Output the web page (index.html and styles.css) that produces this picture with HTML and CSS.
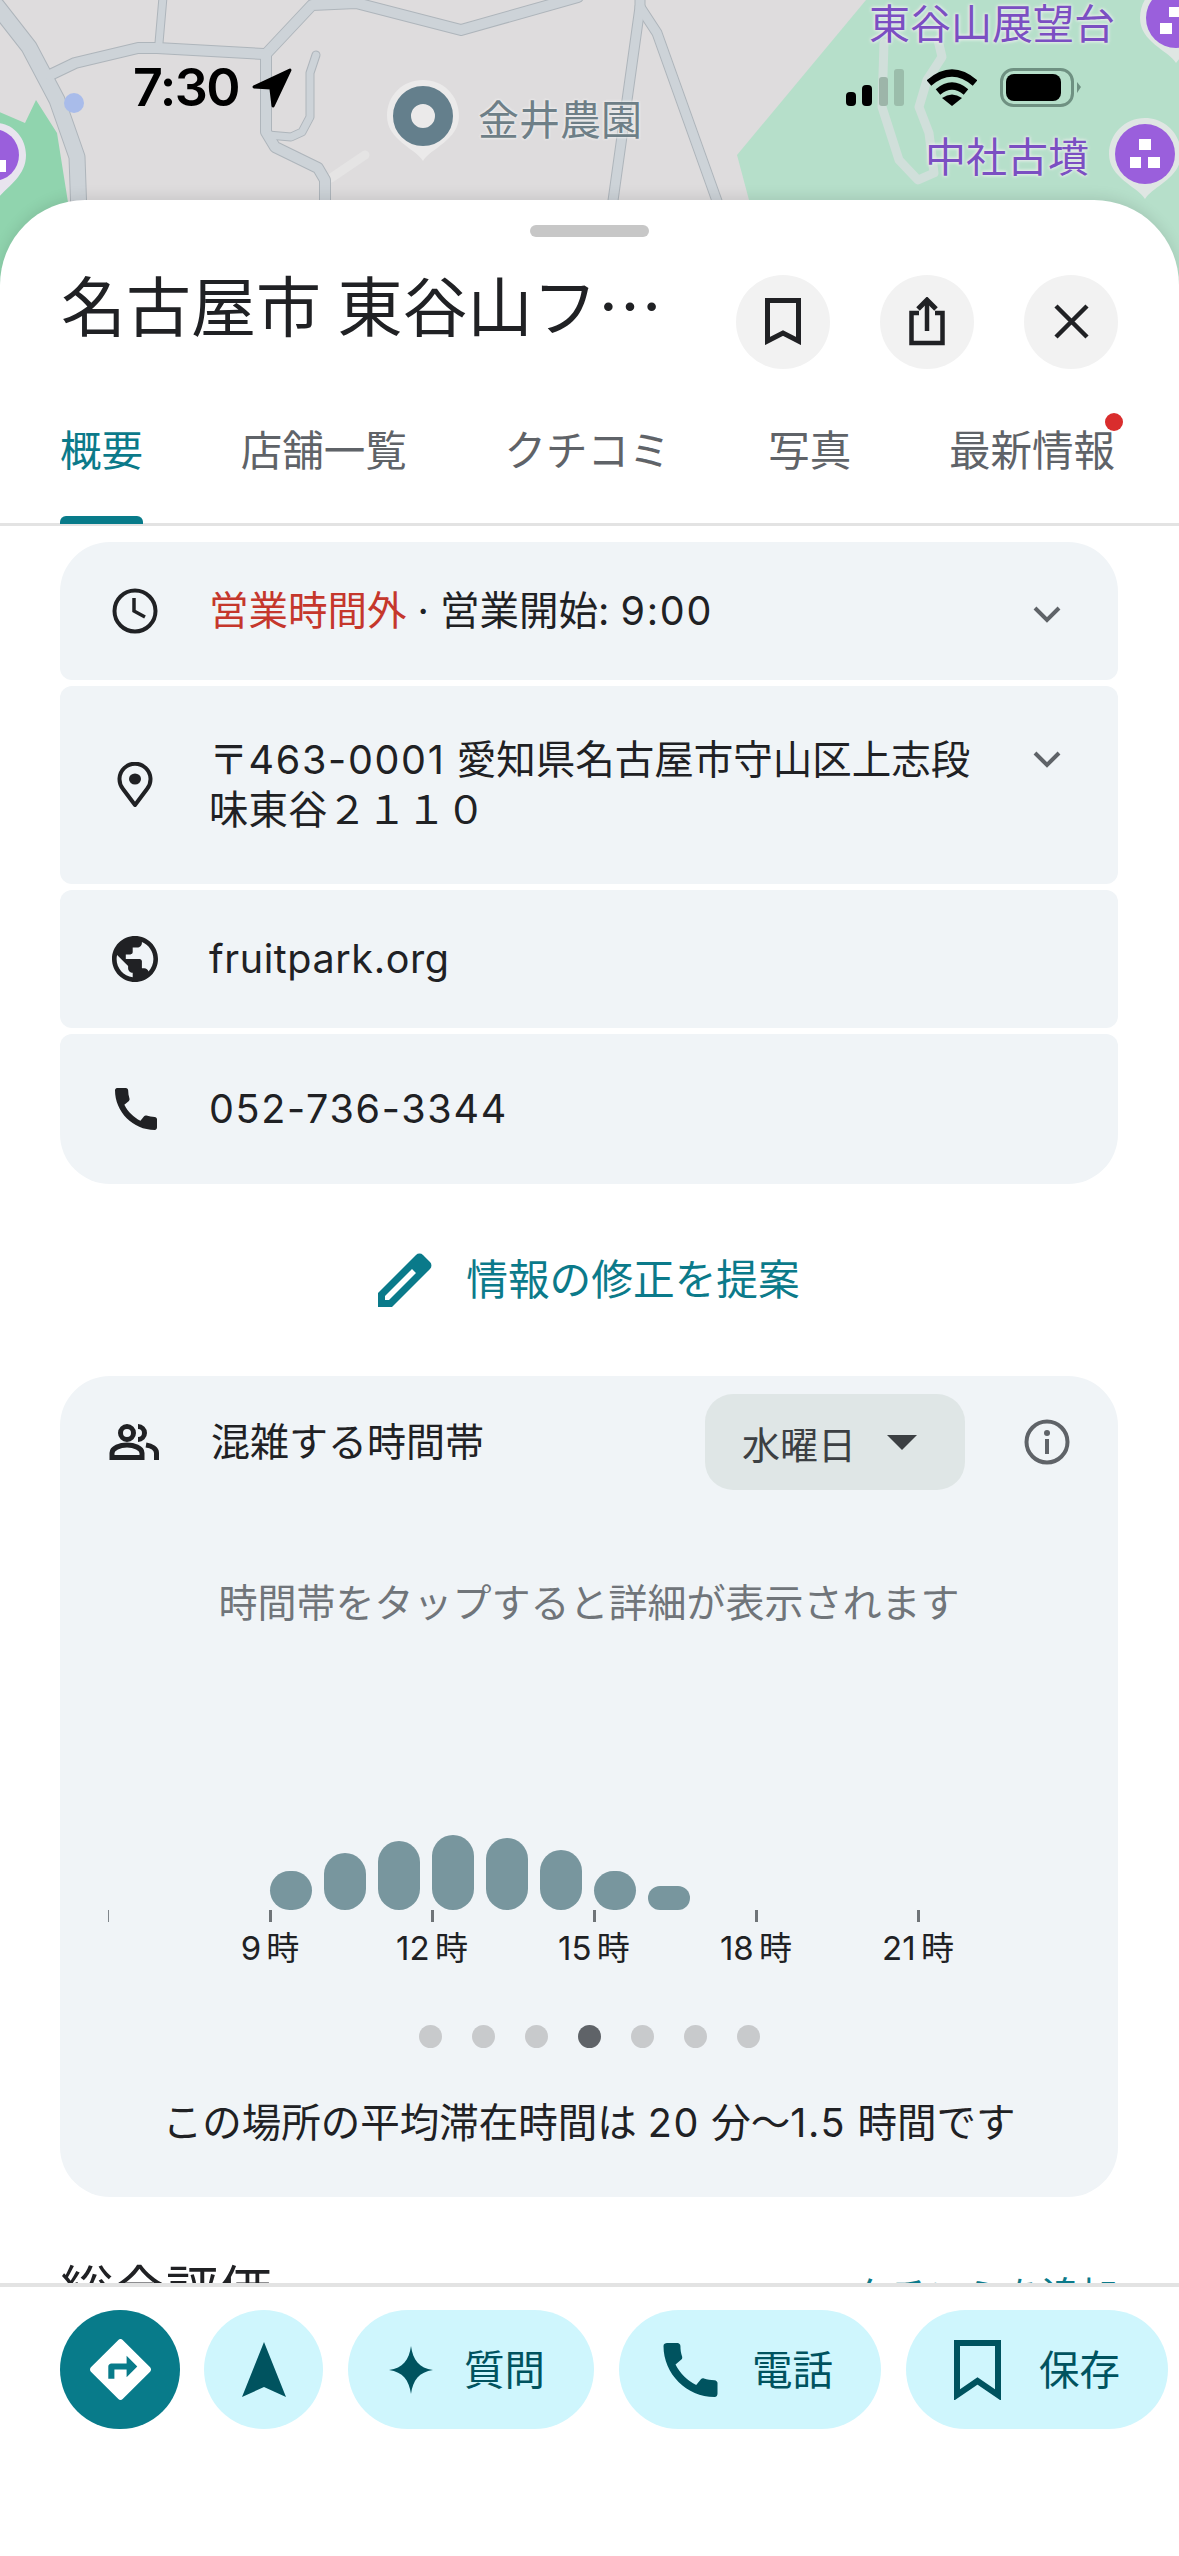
FILE: index.html
```html
<!DOCTYPE html>
<html lang="ja">
<head>
<meta charset="utf-8">
<title>名古屋市 東谷山フルーツパーク</title>
<link rel="stylesheet" href="styles.css">
</head>
<body>
<div class="phone">
  <div class="map">
    <svg class="map-art" width="1179" height="300" viewBox="0 0 1179 300">
      <rect width="1179" height="300" fill="#dedcdd"/>
      <path d="M866 0L737 155L753 215L780 300H1179V0Z" fill="#b6dfca"/>
      <path d="M-5 110L25 123L36 100L57 133L70 215L72 300H-5Z" fill="#90d4ae"/>
      <g fill="none" stroke-linejoin="round" stroke-linecap="round">
        <g stroke="#d0dfda" stroke-width="9">
          <path d="M884 43L882 107L899 160L918 180L934 173L929 133L919 107L927 80L942 57L938 40"/>
        </g>
        <path d="M331 178L365 155" stroke="#e5e4e4" stroke-width="9"/>
        <g stroke="#aeb5bb">
          <path d="M-3 6L29 47L57 100L77 157L82 300" stroke-width="17"/>
          <path d="M50 75L75 63L138 48L157 48L264 54" stroke-width="12"/>
          <path d="M159 43L163 -3" stroke-width="9"/>
          <path d="M266 54L312 5L356 3L461 30L578 -3" stroke-width="12"/>
          <path d="M266 54L266 132L275 147L318 168L325 180L325 215" stroke-width="12"/>
          <path d="M316 55L310 73L310 117L302 132L291 137L268 135" stroke-width="9"/>
          <path d="M640 -3L640 7L611 215" stroke-width="11"/>
          <path d="M640 7L657 33L722 215" stroke-width="11"/>
        </g>
        <g stroke="#cdd3d8">
          <path d="M-3 6L29 47L57 100L77 157L82 300" stroke-width="15"/>
          <path d="M50 75L75 63L138 48L157 48L264 54" stroke-width="10"/>
          <path d="M159 43L163 -3" stroke-width="7"/>
          <path d="M266 54L312 5L356 3L461 30L578 -3" stroke-width="10"/>
          <path d="M266 54L266 132L275 147L318 168L325 180L325 215" stroke-width="10"/>
          <path d="M316 55L310 73L310 117L302 132L291 137L268 135" stroke-width="7"/>
          <path d="M640 -3L640 7L611 215" stroke-width="9"/>
          <path d="M640 7L657 33L722 215" stroke-width="9"/>
        </g>
      </g>
      <circle cx="74" cy="103" r="10" fill="#a9bcea"/>
      <path d="M423 161C415 148 387 140 387 116C387 95 403 80 423 80S459 95 459 116C459 140 431 148 423 161Z" fill="#ebeaea"/>
      <circle cx="423" cy="116" r="21" fill="none" stroke="#647f8c" stroke-width="18"/>
      <path d="M-3 200C-10 188 -32 178 -32 155C-32 137 -18 123 -3 123S26 137 26 155C26 178 4 188 -3 200Z" fill="#e8e4ee"/>
      <circle cx="-7" cy="155" r="26" fill="#9a5fdc"/>
      <rect x="0" y="160" width="6" height="12" fill="#fff"/>
      <path d="M1145 199C1137 186 1109 178 1109 154C1109 134 1125 118 1145 118S1181 134 1181 154C1181 178 1153 186 1145 199Z" fill="#dfe6e3"/>
      <circle cx="1145" cy="154" r="30" fill="#9a5fdc"/>
      <path d="M1139 139H1151V150H1139ZM1130 157H1141V168H1130ZM1148 157H1160V168H1148Z" fill="#fff"/>
      <path d="M1176 63C1168 50 1140 42 1140 18C1140 -2 1156 -18 1176 -18S1212 -2 1212 18C1212 42 1184 50 1176 63Z" fill="#dfe6e3"/>
      <circle cx="1176" cy="18" r="30" fill="#9a5fdc"/>
      <path d="M1169 7H1181V17H1169ZM1160 23H1172V34H1160Z" fill="#fff"/>
    </svg>
    <span class="map-label map-label-grey">金井農園</span>
    <span class="map-label map-label-peak">東谷山展望台</span>
    <span class="map-label map-label-tomb">中社古墳</span>
    <div class="status-time">
      <span>7:30</span>
      <svg class="status-arrow" width="40" height="40" viewBox="0 0 38 38"><path d="M2 18L36 2L20 36L18 19Z" fill="#000" stroke="#000" stroke-width="3" stroke-linejoin="round"/></svg>
    </div>
    <div class="status-right">
      <svg width="58" height="37" viewBox="0 0 58 37">
        <rect x="0" y="23" width="10" height="14" rx="4" fill="#000"/>
        <rect x="16" y="16" width="10" height="21" rx="4" fill="#000"/>
        <rect x="33" y="8" width="9" height="29" rx="3" fill="#9db5a9"/>
        <rect x="48" y="0" width="10" height="37" rx="3" fill="#9bbdab"/>
      </svg>
      <svg width="50" height="37" viewBox="0 0 50 37" fill="none" stroke="#000" stroke-width="7">
        <path d="M2 14Q25 -6 48 14"/>
        <path d="M11 23Q25 11 39 23"/>
        <path d="M25 37L15 29Q25 22 35 29Z" fill="#000" stroke="none"/>
      </svg>
      <svg width="81" height="39" viewBox="0 0 81 39">
        <rect x="1.500" y="1.500" width="71" height="36" rx="12" fill="none" stroke="#6f9182" stroke-width="3"/>
        <rect x="6" y="6" width="55" height="27" rx="8" fill="#000"/>
        <path d="M77 14L81 19L77 25Z" fill="#6f9182"/>
      </svg>
    </div>
  </div>

  <main class="sheet">
    <div class="handle"></div>
    <header class="head">
      <h1 class="title">名古屋市 東谷山フルーツパーク</h1>
      <div class="head-actions">
        <button class="round-btn"><svg width="36" height="47" viewBox="0 0 36 47" fill="none" stroke="#202124" stroke-width="5"><path d="M2.500 2.500H33.500V43L18 35L2.500 43Z"/></svg></button>
        <button class="round-btn"><svg width="36" height="49" viewBox="0 0 36 49" fill="none" stroke="#202124" stroke-width="4.500"><path d="M10 16H2.500V46H33.500V16H26"/><path d="M18 34V5"/><path d="M9 12L18 3L27 12" stroke-width="5"/></svg></button>
        <button class="round-btn"><svg width="35" height="35" viewBox="0 0 35 35" fill="none" stroke="#202124" stroke-width="4.500"><path d="M2 2L33 33M33 2L2 33"/></svg></button>
      </div>
    </header>
    <nav class="tabs">
      <a class="tab tab-active">概要</a>
      <a class="tab">店舗一覧</a>
      <a class="tab">クチコミ</a>
      <a class="tab">写真</a>
      <a class="tab tab-dot">最新情報</a>
    </nav>

    <div class="scroll">
      <section class="info">
        <div class="row row-hours">
          <svg class="row-icon" width="46" height="46" viewBox="0 0 46 46" fill="none" stroke="#202124" stroke-width="4"><circle cx="23" cy="23" r="20.500"/><path d="M22 10V23L33 29" stroke-width="3.500"/></svg>
          <p class="row-text"><span class="closed">営業時間外</span> · 営業開始: <span class="num">9:00</span></p>
          <svg class="chev" width="28" height="18" viewBox="0 0 28 18" fill="none" stroke="#5f6368" stroke-width="4"><path d="M2 3L14 15L26 3"/></svg>
        </div>
        <div class="row row-addr">
          <svg class="row-icon" width="46" height="46" viewBox="0 0 46 46"><path d="M23 43L11 27A15.500 15.500 0 1 1 35 27Z" fill="none" stroke="#202124" stroke-width="4" stroke-linejoin="round"/><ellipse cx="23" cy="17" rx="6" ry="5.500" fill="#202124"/></svg>
          <p class="row-text">〒<span class="num">463-0001</span> 愛知県名古屋市守山区上志段味東谷２１１０</p>
          <svg class="chev chev-top" width="28" height="18" viewBox="0 0 28 18" fill="none" stroke="#5f6368" stroke-width="4"><path d="M2 3L14 15L26 3"/></svg>
        </div>
        <div class="row row-web">
          <svg class="row-icon" width="46" height="46" viewBox="2 2 20 20"><path fill="#202124" d="M12 2C6.480 2 2 6.480 2 12s4.480 10 10 10 10-4.480 10-10S17.520 2 12 2zm-1 17.930c-3.950-.490-7-3.850-7-7.930 0-.620.080-1.210.210-1.790L9 15v1c0 1.100.900 2 2 2v1.930zm6.900-2.540c-.260-.810-1-1.390-1.900-1.390h-1v-3c0-.550-.450-1-1-1H8v-2h2c.550 0 1-.450 1-1V7h2c1.100 0 2-.900 2-2v-.410c2.930 1.190 5 4.060 5 7.410 0 2.080-.800 3.970-2.100 5.390z"/></svg>
          <p class="row-text row-text-web">fruitpark.org</p>
        </div>
        <div class="row row-phone">
          <svg class="row-icon" width="42" height="42" viewBox="3 3 18 18"><path fill="#202124" d="M20.010 15.380c-1.230 0-2.420-.200-3.530-.560-.350-.120-.740-.030-1.010.240l-1.570 1.970c-2.830-1.350-5.480-3.900-6.890-6.830l1.950-1.660c.270-.280.350-.670.240-1.020-.370-1.110-.560-2.300-.560-3.530 0-.540-.450-.990-.990-.990H4.190C3.650 3 3 3.240 3 3.990 3 13.280 10.730 21 20.010 21c.710 0 .990-.630.990-1.180v-3.450c0-.540-.450-.990-.990-.990z"/></svg>
          <p class="row-text"><span class="num">052-736-3344</span></p>
        </div>
      </section>

      <a class="suggest">
        <svg width="54" height="54" viewBox="0 0 54 54"><path fill-rule="evenodd" fill="#0a7a8a" d="M0 54V40L38 2a5 5 0 0 1 7 0l7 7a5 5 0 0 1 0 7L14 54ZM7 47h4L38 20 34 16 7 43Z"/></svg>
        <span>情報の修正を提案</span>
      </a>

      <section class="busy">
        <div class="busy-head">
          <svg class="busy-icon" width="50" height="36" viewBox="0 0 50 36" fill="none" stroke="#202124" stroke-width="5"><circle cx="18" cy="9" r="6.500"/><path d="M3 33.500V29C3 24 11 21 18 21S33 24 33 29V33.500Z"/><path d="M29 2.500A6.500 6.500 0 0 1 29 15.500"/><path d="M37 21C43 22 47.500 25 47.500 29V36"/></svg>
          <h2 class="busy-title">混雑する時間帯</h2>
          <div class="day-select"><span>水曜日</span><svg width="30" height="15" viewBox="0 0 30 15"><path d="M0 0H30L15 15Z" fill="#3c4043"/></svg></div>
          <svg class="busy-info" width="46" height="46" viewBox="0 0 46 46"><circle cx="23" cy="23" r="20.500" fill="none" stroke="#5f6368" stroke-width="4"/><circle cx="23" cy="14" r="3" fill="#5f6368"/><rect x="21" y="20" width="4" height="15" fill="#5f6368"/></svg>
        </div>
        <p class="hint">時間帯をタップすると詳細が表示されます</p>
        <div class="bars">
          <i class="bar" style="height:39px"></i>
          <i class="bar" style="height:57px"></i>
          <i class="bar" style="height:69px"></i>
          <i class="bar" style="height:75px"></i>
          <i class="bar" style="height:72px"></i>
          <i class="bar" style="height:60px"></i>
          <i class="bar" style="height:39px"></i>
          <i class="bar" style="height:24px"></i>
        </div>
        <div class="axis">
          <div class="tick tick-first"><i></i></div>
          <div class="tick"><i></i><span>9 時</span></div>
          <div class="tick"><i></i><span>12 時</span></div>
          <div class="tick"><i></i><span>15 時</span></div>
          <div class="tick"><i></i><span>18 時</span></div>
          <div class="tick"><i></i><span>21 時</span></div>
        </div>
        <div class="dots">
          <i></i><i></i><i></i><i class="dot-on"></i><i></i><i></i><i></i>
        </div>
        <p class="stay">この場所の平均滞在時間は <span class="num">20</span> 分〜<span class="num">1.5</span> 時間です</p>
      </section>

      <div class="reviews-head">
        <h2>総合評価</h2>
        <a>クチコミを追加</a>
      </div>
    </div>

    <footer class="actions">
      <button class="act act-main"><svg width="61" height="61" viewBox="2 2 20 20"><path fill="#fff" d="M21.710 11.290l-9-9c-.390-.390-1.020-.390-1.410 0l-9 9c-.390.390-.390 1.020 0 1.410l9 9c.390.390 1.020.390 1.410 0l9-9c.390-.380.390-1.010 0-1.410zM14 14.500V12h-4v3H8v-4c0-.550.450-1 1-1h5V7.500l3.500 3.500-3.500 3.500z"/></svg></button>
      <button class="act act-nav"><svg width="44" height="56" viewBox="0 0 44 56"><path d="M22 0L44 55L22 45L0 55Z" fill="#00535f"/></svg></button>
      <button class="act act-ask"><svg width="44" height="48" viewBox="0 0 44 48"><path d="M22 0C24 14 30 22 44 24C30 26 24 34 22 48C20 34 14 26 0 24C14 22 20 14 22 0Z" fill="#00535f"/></svg><span>質問</span></button>
      <button class="act act-call"><svg width="55" height="54" viewBox="3 3 18 18"><path fill="#00535f" d="M20.010 15.380c-1.230 0-2.420-.200-3.530-.560-.350-.120-.740-.030-1.010.240l-1.570 1.970c-2.830-1.350-5.480-3.900-6.890-6.830l1.950-1.660c.270-.280.350-.670.240-1.020-.370-1.110-.560-2.300-.560-3.530 0-.540-.450-.990-.990-.990H4.190C3.650 3 3 3.240 3 3.990 3 13.280 10.730 21 20.010 21c.710 0 .990-.630.990-1.180v-3.450c0-.540-.450-.990-.990-.990z"/></svg><span>電話</span></button>
      <button class="act act-save"><svg width="47" height="60" viewBox="0 0 47 60" fill="none" stroke="#00535f" stroke-width="6"><path d="M3 3H44V55L23.500 41L3 55Z"/></svg><span>保存</span></button>
    </footer>
  </main>
</div>
</body>
</html>
```
FILE: styles.css
```css
* { box-sizing: border-box; }
html, body { margin: 0; padding: 0; background: #fff; }
body {
  font-family: Inter, "Noto Sans CJK JP", sans-serif;
  color: #202124;
}
p, h1, h2 { margin: 0; font-weight: 400; }
button { border: 0; padding: 0; font: inherit; color: inherit; }
i { display: block; }
svg { display: block; flex: none; }

.phone { position: relative; width: 1179px; height: 2556px; overflow: hidden; background: #fff; }

/* map canvas */
.map { position: absolute; left: 0; top: 0; width: 1179px; height: 300px; overflow: hidden; }
.map-art { position: absolute; left: 0; top: 0; }
.map-label {
  position: absolute;
  font-size: 41px;
  line-height: 48px;
  white-space: nowrap;
  color: #7b4fc2;
  text-shadow: 0 0 3px #e6ecea, 0 0 3px #e6ecea, 0 0 4px #e6ecea;
}
.map-label-grey { left: 478px; top: 96px; color: #6e7f87; text-shadow: 0 0 3px #f1f1f1, 0 0 3px #f1f1f1; }
.map-label-peak { left: 869px; top: 0; }
.map-label-tomb { left: 925px; top: 133px; }

.status-time {
  position: absolute; left: 133px; top: 59px;
  display: flex; align-items: center; gap: 13px;
  font-size: 52px; line-height: 58px; font-weight: 600;
  color: #000;
  letter-spacing: -1.500px;
}
.status-right {
  position: absolute; left: 846px; top: 68px;
  display: flex; align-items: center; gap: 23px;
}

/* sheet */
.sheet {
  position: absolute; left: 0; right: 0; top: 200px; bottom: 0;
  background: #fff;
  border-radius: 85px 85px 0 0;
  box-shadow: 0 -3px 14px rgba(0,0,0,.1);
  display: flex; flex-direction: column;
}
.handle { flex: none; width: 119px; height: 12px; margin: 25px auto 0; border-radius: 6px; background: #c7c7c7; }

.head { flex: none; height: 119px; margin-top: 25px; padding: 0 61px 0 61px; display: flex; align-items: center; justify-content: space-between; }
.title {
  align-self: flex-start;
  width: 612px;
  margin-top: -6px;
  font-family: "Noto Sans CJK JP", sans-serif;
  font-size: 65px; line-height: 94px;
  word-spacing: 2px;
  white-space: nowrap; overflow: hidden; text-overflow: ellipsis;
  color: #202124;
}
.head-actions { display: flex; gap: 50px; }
.round-btn { width: 94px; height: 94px; border-radius: 50%; background: #f2f2f2; display: flex; align-items: center; justify-content: center; }

.tabs { flex: none; height: 145px; padding: 40px 64px 0 60px; display: flex; justify-content: space-between; align-items: flex-start; border-bottom: 3px solid #e3e3e3; }
.tab { position: relative; display: block; height: 102px; font-size: 41.500px; line-height: 60px; color: #5f6368; white-space: nowrap; }
.tab-active { color: #0b7a8a; }
.tab-active::after { content: ""; position: absolute; left: 0; right: 0; bottom: -1px; height: 8px; border-radius: 6px 6px 0 0; background: #087b8a; }
.tab-dot::after { content: ""; position: absolute; right: -8px; top: -8px; width: 18px; height: 18px; border-radius: 50%; background: #d92d2d; }

.scroll { flex: 1; min-height: 0; overflow: hidden; padding: 16px 61px 0 60px; }

.info { display: flex; flex-direction: column; gap: 6px; }
.row { display: flex; align-items: center; background: #f0f4f7; border-radius: 12px; padding: 0 57px 0 52px; position: relative; }
.row-hours { height: 138px; border-radius: 50px 50px 12px 12px; }
.row-addr { height: 198px; }
.row-web { height: 138px; }
.row-phone { height: 150px; border-radius: 12px 12px 50px 50px; }
.row-icon { flex: none; margin-right: 51px; }
.row-phone .row-icon { margin-left: 3px; margin-right: 52px; }
.row-text { flex: 1; font-size: 39.500px; line-height: 50px; color: #202124; padding-right: 40px; }
.row-text-web { letter-spacing: .6px; }
.num { letter-spacing: 1.700px; }
.closed { color: #c5372c; }
.chev { flex: none; }
.chev-top { align-self: flex-start; margin-top: 64px; }
.row-hours .chev { margin-top: 6px; }

.suggest { height: 192px; display: flex; align-items: center; justify-content: center; gap: 34px; font-size: 41.700px; color: #0b7a8a; }
.suggest span { margin-top: -6px; }

.busy { height: 821px; background: #f0f4f7; border-radius: 50px; padding: 18px 0 0; display: flex; flex-direction: column; }
.busy-head { display: flex; align-items: center; height: 96px; padding-left: 49px; }
.busy-icon { margin-right: 52px; }
.busy-title { font-size: 39px; line-height: 50px; flex: 1; }
.day-select { width: 260px; height: 96px; border-radius: 28px; background: #dfe6e6; display: flex; align-items: center; padding-left: 37px; gap: 31px; font-size: 38px; color: #3c4043; }
.busy-info { margin: 0 48px 0 59px; }
.hint { margin-top: 88px; font-size: 39px; line-height: 50px; text-align: center; color: #70757a; }

.bars { margin: 207px 0 0 210px; display: flex; align-items: flex-end; gap: 12px; height: 75px; }
.bar { width: 42px; border-radius: 21px; background: #78969e; }
.bar:last-child { border-radius: 16px; }

.axis { margin-left: -33px; display: grid; grid-template-columns: repeat(6, 162px); }
.tick { display: flex; flex-direction: column; align-items: center; }
.tick i { width: 3px; height: 12px; background: #6f7478; }
.tick-first i { width: 1px; background: #80868b; }
.tick span { margin-top: 6px; font-size: 33px; line-height: 40px; word-spacing: -4px; white-space: nowrap; color: #202124; }

.dots { margin-top: 57px; display: flex; justify-content: center; gap: 30px; }
.dots i { width: 23px; height: 23px; border-radius: 50%; background: #c8cacc; }
.dots .dot-on { background: #5f6368; }

.stay { margin-top: 50px; font-size: 39.500px; line-height: 50px; text-align: center; color: #202124; white-space: nowrap; }

.reviews-head { margin-top: 59px; display: flex; justify-content: space-between; align-items: center; }
.reviews-head h2 { font-size: 53px; line-height: 70px; }
.reviews-head a { font-size: 38px; line-height: 50px; color: #0b7a8a; margin-top: 8px; }

.actions { flex: none; height: 273px; border-top: 4px solid #e3e3e3; padding: 23px 0 0 60px; display: flex; align-items: flex-start; gap: 25px; background: #fff; position: relative; }
.act { flex: none; height: 119px; border-radius: 60px; background: #cff6fd; color: #00535f; display: flex; align-items: center; font-size: 40.500px; white-space: nowrap; font-family: Inter, "Noto Sans CJK JP", sans-serif; }
.act span { margin-top: -5px; }
.act-main { width: 120px; background: #087b8a; justify-content: center; margin-right: -1px; }
.act-nav { width: 119px; justify-content: center; }
.act-ask { width: 246px; padding-left: 41px; gap: 31px; }
.act-call { width: 262px; padding-left: 44px; gap: 34px; }
.act-save { width: 262px; padding-left: 48px; gap: 38px; }
```
